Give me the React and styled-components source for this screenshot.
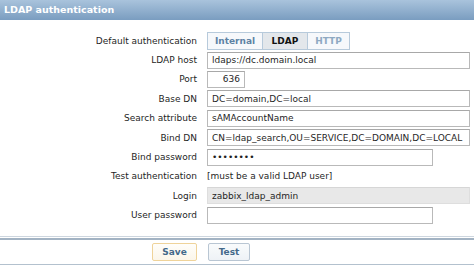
import React from "react";
import styled, { createGlobalStyle } from "styled-components";

const GlobalStyle = createGlobalStyle`
    body {
        margin: 0;
        background: #ffffff;
        font-family: "DejaVu Sans", Verdana, sans-serif;
        font-size: 9px;
        color: #1f1f1f;
    }
`

const Page = styled.div`
    width: 474px;
    height: 268px;
    overflow: hidden;
    background: #ffffff;
`

const Header = styled.div`
    height: 20px;
    line-height: 19px;
    padding-left: 4px;
    background: linear-gradient(#a9c3dc, #7a9dc0);
    color: #ffffff;
    font-weight: bold;
    font-size: 9.5px;
`

const Form = styled.div`
    display: grid;
    grid-template-columns: 197px 1fr;
    grid-auto-rows: 19.4px;
    column-gap: 10px;
    padding-top: 11px;
    padding-bottom: 11px;
`

const Label = styled.div`
    display: flex;
    align-items: center;
    justify-content: flex-end;
    white-space: nowrap;
`

const Field = styled.div`
    display: flex;
    align-items: center;
`

const Tabs = styled.div`
    display: flex;
    height: 18px;
`

const Tab = styled.div`
    box-sizing: border-box;
    display: flex;
    align-items: center;
    justify-content: center;
    width: ${p => p.$w}px;
    border: 1px solid #b7cadb;
    margin-left: -1px;
    font-weight: bold;
    color: ${p => (p.$active ? "#111111" : p.$muted ? "#8ea9c2" : "#5d82a4")};
    background: ${p => (p.$active ? "#e3e7eb" : "#f6f8fb")};
    &:first-child {
        margin-left: 0;
    }
`

const TextInput = styled.input`
    box-sizing: border-box;
    width: ${p => p.$w}px;
    height: 17px;
    margin: 0;
    padding: 0 4px;
    border: 1px solid ${p => (p.$disabled ? "#dedede" : "#b9b9b9")};
    border-top-color: ${p => (p.$disabled ? "#d6d6d6" : "#a8a8a8")};
    background: ${p => (p.$disabled ? "#e8e8e8" : "#ffffff")};
    font-family: "DejaVu Sans", Verdana, sans-serif;
    font-size: 9px;
    color: #1f1f1f;
    text-align: ${p => (p.$right ? "right" : "left")};
    outline: none;
`

const Note = styled.span`
    color: #1f1f1f;
`

const Footer = styled.div`
    display: grid;
    grid-template-columns: 197px 1fr;
    column-gap: 11px;
    padding: 6px 0 3px;
    border-top: 1px solid #cdd6df;
    box-shadow: inset 0 1px 0 #ffffff, inset 0 3px 0 #a3b3c3;
    border-bottom: 1px solid #b3c1ce;
`

const Button = styled.div`
    box-sizing: border-box;
    height: 18px;
    width: ${p => p.$w}px;
    display: flex;
    align-items: center;
    justify-content: center;
    justify-self: ${p => (p.$end ? "end" : "start")};
    border: 1px solid ${p => (p.$primary ? "#efd39a" : "#b9c6d3")};
    border-radius: 2px;
    background: ${p => (p.$primary ? "linear-gradient(#fffefa, #fbf6ea)" : "linear-gradient(#f9fbfc, #eef2f6)")};
    color: #44698a;
    font-weight: bold;
`

function Row({ label, children }) {
    return (
        <>
            <Label>{label}</Label>
            <Field>{children}</Field>
        </>
    )
}

export default function App() {
    return (
        <Page>
            <GlobalStyle />
            <Header>LDAP authentication</Header>
            <Form>
                <Row label="Default authentication">
                    <Tabs>
                        <Tab $w={56}>Internal</Tab>
                        <Tab $w={46} $active>LDAP</Tab>
                        <Tab $w={43} $muted>HTTP</Tab>
                    </Tabs>
                </Row>
                <Row label="LDAP host">
                    <TextInput $w={263} readOnly defaultValue="ldaps://dc.domain.local" />
                </Row>
                <Row label="Port">
                    <TextInput $w={38} $right readOnly defaultValue="636" />
                </Row>
                <Row label="Base DN">
                    <TextInput $w={263} readOnly defaultValue="DC=domain,DC=local" />
                </Row>
                <Row label="Search attribute">
                    <TextInput $w={263} readOnly defaultValue="sAMAccountName" />
                </Row>
                <Row label="Bind DN">
                    <TextInput $w={263} readOnly defaultValue="CN=ldap_search,OU=SERVICE,DC=DOMAIN,DC=LOCAL" />
                </Row>
                <Row label="Bind password">
                    <TextInput $w={226} type="password" readOnly defaultValue="password" />
                </Row>
                <Row label="Test authentication">
                    <Note>[must be a valid LDAP user]</Note>
                </Row>
                <Row label="Login">
                    <TextInput $w={263} $disabled readOnly defaultValue="zabbix_ldap_admin" />
                </Row>
                <Row label="User password">
                    <TextInput $w={226} type="password" readOnly defaultValue="" />
                </Row>
            </Form>
            <Footer>
                <Button $w={45} $end $primary>Save</Button>
                <Button $w={42}>Test</Button>
            </Footer>
        </Page>
    )
}
